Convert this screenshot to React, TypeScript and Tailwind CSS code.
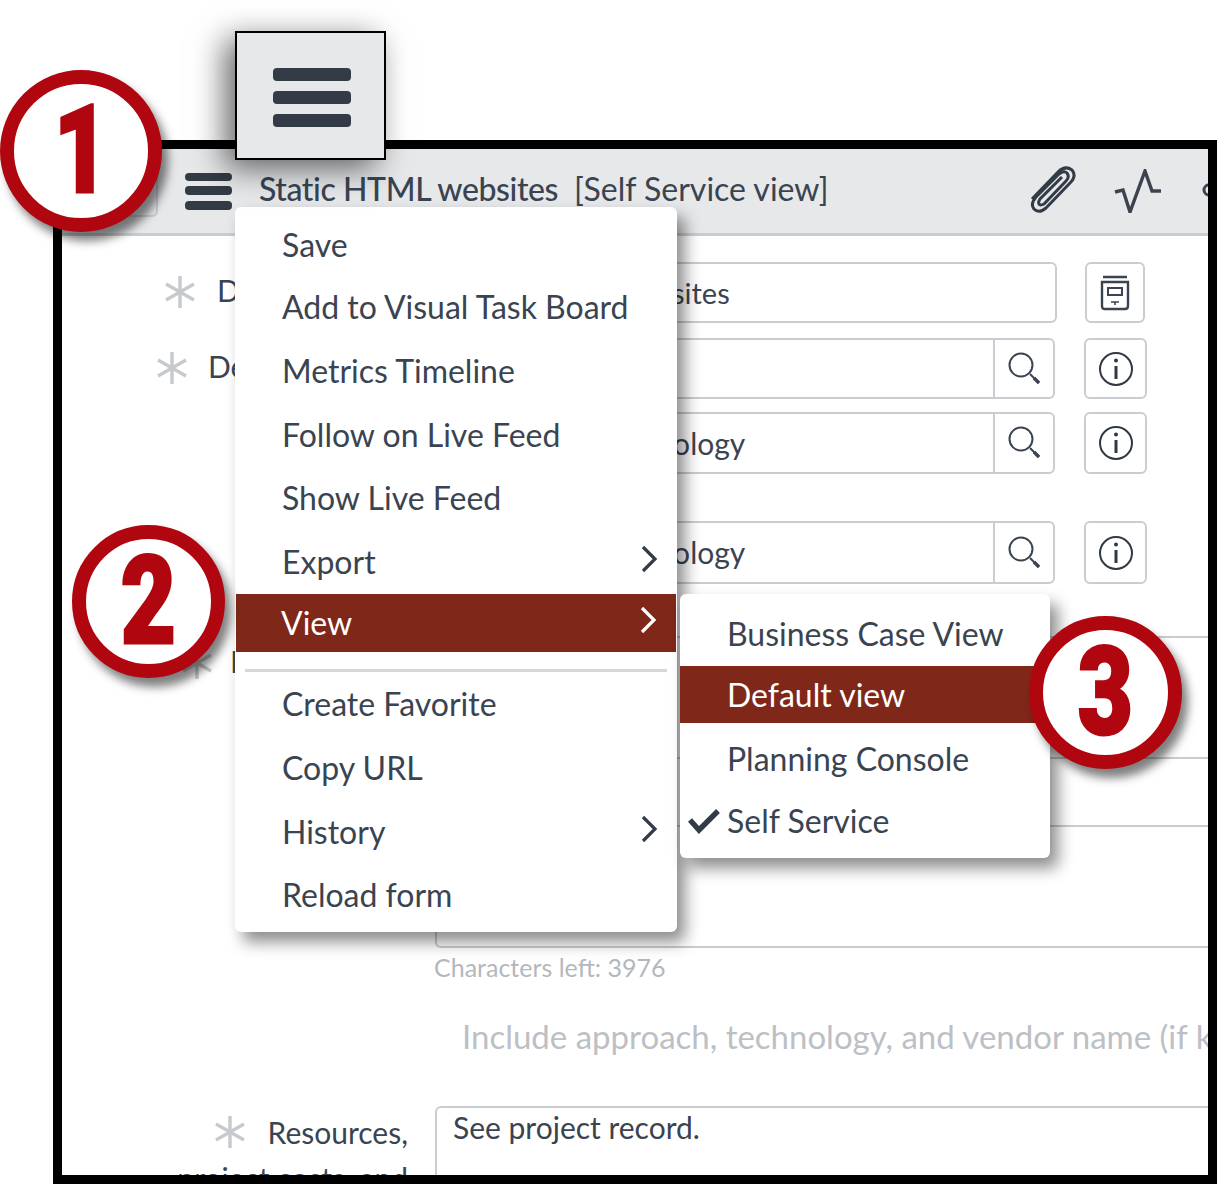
const menuItems = [
  { label: "Save", h: "h-[61px]" },
  { label: "Add to Visual Task Board", h: "h-[64px]" },
  { label: "Metrics Timeline", h: "h-[64px]" },
  { label: "Follow on Live Feed", h: "h-[63px]" },
  { label: "Show Live Feed", h: "h-[63px]" },
  { label: "Export", h: "h-[65px]", arrow: true },
];

const menuItemsLower = [
  { label: "Create Favorite", h: "h-[64px]" },
  { label: "Copy URL", h: "h-[64px]" },
  { label: "History", h: "h-[63px]", arrow: true },
  { label: "Reload form", h: "h-[63px]" },
];

function Chevron({ light }: { light?: boolean }) {
  return (
    <svg
      viewBox="0 0 17 28"
      className="-mt-[6px] h-[28px] w-[17px]"
      fill="none"
      stroke={light ? "#ffffff" : "#333b47"}
      strokeWidth="3.2"
    >
      <path d="M2 2L14 14L2 26" />
    </svg>
  );
}

function Asterisk({ className }: { className: string }) {
  return (
    <svg viewBox="0 0 32 32" className={className} fill="none" stroke="#c6cace" strokeWidth="3.4">
      <path d="M16 0V32M2 8L30 24M2 24L30 8" />
    </svg>
  );
}

function SearchIcon() {
  return (
    <svg viewBox="0 0 34 34" className="h-[34px] w-[34px]" fill="none" stroke="#3b4350">
      <circle cx="14" cy="13" r="11.5" strokeWidth="2" />
      <path d="M23 22L32 31" strokeWidth="2" />
      <path d="M27 26L32 31" strokeWidth="3.4" />
    </svg>
  );
}

function InfoIcon() {
  return (
    <svg viewBox="0 0 36 36" className="h-[36px] w-[36px]" fill="none" stroke="#2f3843">
      <circle cx="18" cy="18" r="16" strokeWidth="2" />
      <path d="M18 15V28" strokeWidth="3" />
      <circle cx="18" cy="9.5" r="2" fill="#2f3843" stroke="none" />
    </svg>
  );
}

function FormIcon() {
  return (
    <svg viewBox="0 0 30 36" className="h-[36px] w-[30px]" fill="none" stroke="#3b4350" strokeWidth="2.4">
      <path d="M3 2H27M2 7H28V31Q28 34 25 34H5Q2 34 2 31Z" />
      <rect x="8" y="13" width="14" height="7" strokeWidth="2" />
      <path d="M11 27H19M15 27V30" strokeWidth="1.6" />
    </svg>
  );
}

function LookupRow({ value, mt, h }: { value: string; mt: string; h: string }) {
  return (
    <div className={`flex ${mt} ${h}`}>
      <div className="ml-[373px] flex w-[620px] rounded-md border-2 border-[#c9cdd1] bg-white">
        <div className="flex flex-1 items-center whitespace-nowrap pl-[17px] text-[30px] text-[#3a4451]">{value}</div>
        <div className="flex w-[60px] items-center justify-center border-l-2 border-[#c9cdd1]">
          <SearchIcon />
        </div>
      </div>
      <div className="ml-[29px] flex w-[63px] items-center justify-center rounded-md border-2 border-[#c9cdd1]">
        <InfoIcon />
      </div>
    </div>
  );
}

function Callout({ n, className }: { n: string; className: string }) {
  return (
    <div
      className={`absolute z-30 flex h-[153px] w-[153px] items-center justify-center rounded-full border-[14px] border-[#b0060f] bg-white shadow-[6px_9px_10px_rgba(0,0,0,0.5)] ${className}`}
    >
      <span className="scale-x-[0.78] font-[Roboto,sans-serif] text-[122px] leading-none font-black text-[#b0060f] [-webkit-text-stroke:3px_#b0060f]">
        {n}
      </span>
    </div>
  );
}

export default function App() {
  return (
    <div className="relative h-[1185px] w-[1218px] overflow-hidden bg-white pl-[53px] pt-[140px] font-[Lato,sans-serif] text-[#3a4451]">
      {/* framed screenshot */}
      <div className="h-[1044px] w-[1164px] overflow-hidden border-[9px] border-black bg-white">
        {/* form header */}
        <div className="relative flex h-[87px] items-center border-b-[3px] border-[#c9cdd1] bg-[#e6e8ea] pb-[4px]">
          <div className="absolute left-[-20px] top-[10px] h-[58px] w-[116px] rounded-md border-2 border-[#c9cdd1]" />
          <div className="ml-[123px] mt-[4px] flex h-[37px] w-[47px] flex-col justify-between">
            <div className="h-[8px] rounded-sm bg-[#333b47]" />
            <div className="h-[9px] rounded-sm bg-[#333b47]" />
            <div className="h-[9px] rounded-sm bg-[#333b47]" />
          </div>
          <div className="ml-[27px] whitespace-nowrap text-[32px] font-medium tracking-[-0.4px]">Static HTML websites</div>
          <div className="ml-[16px] whitespace-nowrap text-[32px]">[Self Service view]</div>
          {/* paperclip */}
          <svg viewBox="0 0 48 48" className="absolute left-[967px] top-[17px] h-[48px] w-[48px]" fill="none" stroke="#333b47" strokeWidth="3">
            <path d="M3 33L29 6Q36 -1 43 4Q48 10 41 17L17 42Q10 48 5 43Q1 38 7 31L30 8Q35 4 38 7Q41 11 37 15L15 38Q11 40 10 38Q9 36 11 33L33 11" />
          </svg>
          {/* activity */}
          <svg viewBox="0 0 48 44" className="absolute left-[1052px] top-[20px] h-[44px] w-[48px]" fill="none" stroke="#3b4350" strokeWidth="3.4">
            <path d="M1 23L9 21L16 43L31 2L38 22H47" />
          </svg>
          <svg viewBox="0 0 20 20" className="absolute left-[1138px] top-[31px] h-[20px] w-[20px]" fill="none" stroke="#3b4350" strokeWidth="3">
            <circle cx="9" cy="10" r="5" />
          </svg>
        </div>

        {/* form rows */}
        <div className="relative">
          <Asterisk className="absolute left-[102px] top-[40px] h-[32px] w-[32px]" />
          <div className="absolute left-[155px] top-[39px] text-[30px] leading-none">D</div>
          <Asterisk className="absolute left-[94px] top-[116px] h-[32px] w-[32px]" />
          <div className="absolute left-[146px] top-[115px] text-[30px] leading-none">De</div>
          <Asterisk className="absolute left-[119px] top-[411px] h-[32px] w-[32px]" />
          <div className="absolute left-[168px] top-[410px] text-[30px] leading-none">I</div>

          <div className="flex pt-[26px]">
            <div className="ml-[373px] flex h-[61px] w-[622px] items-center whitespace-nowrap rounded-md border-2 border-[#c9cdd1] pl-[15px] text-[29px]">
              Static HTML websites
            </div>
            <div className="ml-[28px] flex h-[61px] w-[60px] items-center justify-center rounded-md border-2 border-[#c9cdd1]">
              <FormIcon />
            </div>
          </div>
          <LookupRow value="" mt="mt-[15px]" h="h-[61px]" />
          <LookupRow value="Enterprise Technology" mt="mt-[13px]" h="h-[62px]" />
          <LookupRow value="Enterprise Technology" mt="mt-[47px]" h="h-[63px]" />

          <div className="ml-[373px] mt-[52px] h-[123px] rounded-l-md border-y-2 border-l-2 border-[#c9cdd1]" />
          <div className="ml-[373px] mt-[66px] h-[123px] rounded-l-md border-y-2 border-l-2 border-[#c9cdd1]" />
          <div className="ml-[372px] mt-[5px] text-[25px] leading-[28px] text-[#b4b8bd]">Characters left: 3976</div>
          <div className="ml-[400px] mt-[35px] whitespace-nowrap text-[33px] leading-[40px] text-[#bcc0c5]">
            Include approach, technology, and vendor name (if known)
          </div>

          <div className="mt-[50px] flex">
            <div className="w-[346px] shrink-0 pt-[3px] text-right text-[30px] leading-[46px]">
              <div className="flex items-center justify-end gap-[22px]">
                <Asterisk className="h-[32px] w-[32px]" />
                <span>Resources,</span>
              </div>
              <div>project costs, and</div>
            </div>
            <div className="ml-[27px] h-[120px] flex-1 rounded-tl-md border-l-2 border-t-2 border-[#c9cdd1] pl-[16px] text-[30px] leading-[38px]">
              See project record.
            </div>
          </div>
        </div>
      </div>

      {/* zoomed hamburger callout */}
      <div className="absolute left-[235px] top-[31px] z-20 flex h-[129px] w-[151px] flex-col items-center justify-center gap-[10px] border-2 border-black bg-[#e6e8ea] pl-[2px] pt-[3px] shadow-[-10px_8px_30px_rgba(0,0,0,0.6)]">
        <div className="h-[13px] w-[78px] rounded-sm bg-[#333b47]" />
        <div className="h-[13px] w-[78px] rounded-sm bg-[#333b47]" />
        <div className="h-[13px] w-[78px] rounded-sm bg-[#333b47]" />
      </div>

      {/* main menu */}
      <div className="absolute left-[235px] top-[207px] z-10 w-[442px] rounded-md bg-white pt-[7px] text-[32px] shadow-[8px_10px_16px_rgba(0,0,0,0.45)]">
        {menuItems.map((item) => (
          <div key={item.label} className={`flex items-center justify-between pl-[47px] pr-[19px] ${item.h}`}>
            <span>{item.label}</span>
            {item.arrow && <Chevron />}
          </div>
        ))}
        <div className="mx-px flex h-[58px] items-center justify-between bg-[#7f2718] pl-[45px] pr-[19px] text-white">
          <span>View</span>
          <Chevron light />
        </div>
        <div className="mx-[10px] mt-[17px] h-[3px] bg-[#d5d7da]" />
        {menuItemsLower.map((item) => (
          <div key={item.label} className={`flex items-center justify-between pl-[47px] pr-[19px] ${item.h}`}>
            <span>{item.label}</span>
            {item.arrow && <Chevron />}
          </div>
        ))}
        <div className="h-[6px]" />
      </div>

      {/* view submenu */}
      <div className="absolute left-[680px] top-[594px] z-10 flex h-[264px] w-[370px] flex-col rounded-md bg-white pt-[7px] text-[32px] shadow-[8px_10px_16px_rgba(0,0,0,0.45)]">
        <div className="flex h-[65px] items-center pl-[47px]">Business Case View</div>
        <div className="flex h-[57px] items-center bg-[#7f2718] pl-[47px] text-white">Default view</div>
        <div className="flex h-[72px] items-center pl-[47px]">Planning Console</div>
        <div className="flex h-[52px] items-center pl-[8px]">
          <svg viewBox="0 0 32 26" className="h-[26px] w-[32px]" fill="none" stroke="#333b47" strokeWidth="5.4">
            <path d="M2 12L11 22L30 3" />
          </svg>
          <span className="ml-[7px]">Self Service</span>
        </div>
      </div>

      <Callout n="1" className="left-[0px] top-[70px] h-[162px] w-[162px]" />
      <Callout n="2" className="left-[72px] top-[525px]" />
      <Callout n="3" className="left-[1029px] top-[616px]" />
    </div>
  );
}
